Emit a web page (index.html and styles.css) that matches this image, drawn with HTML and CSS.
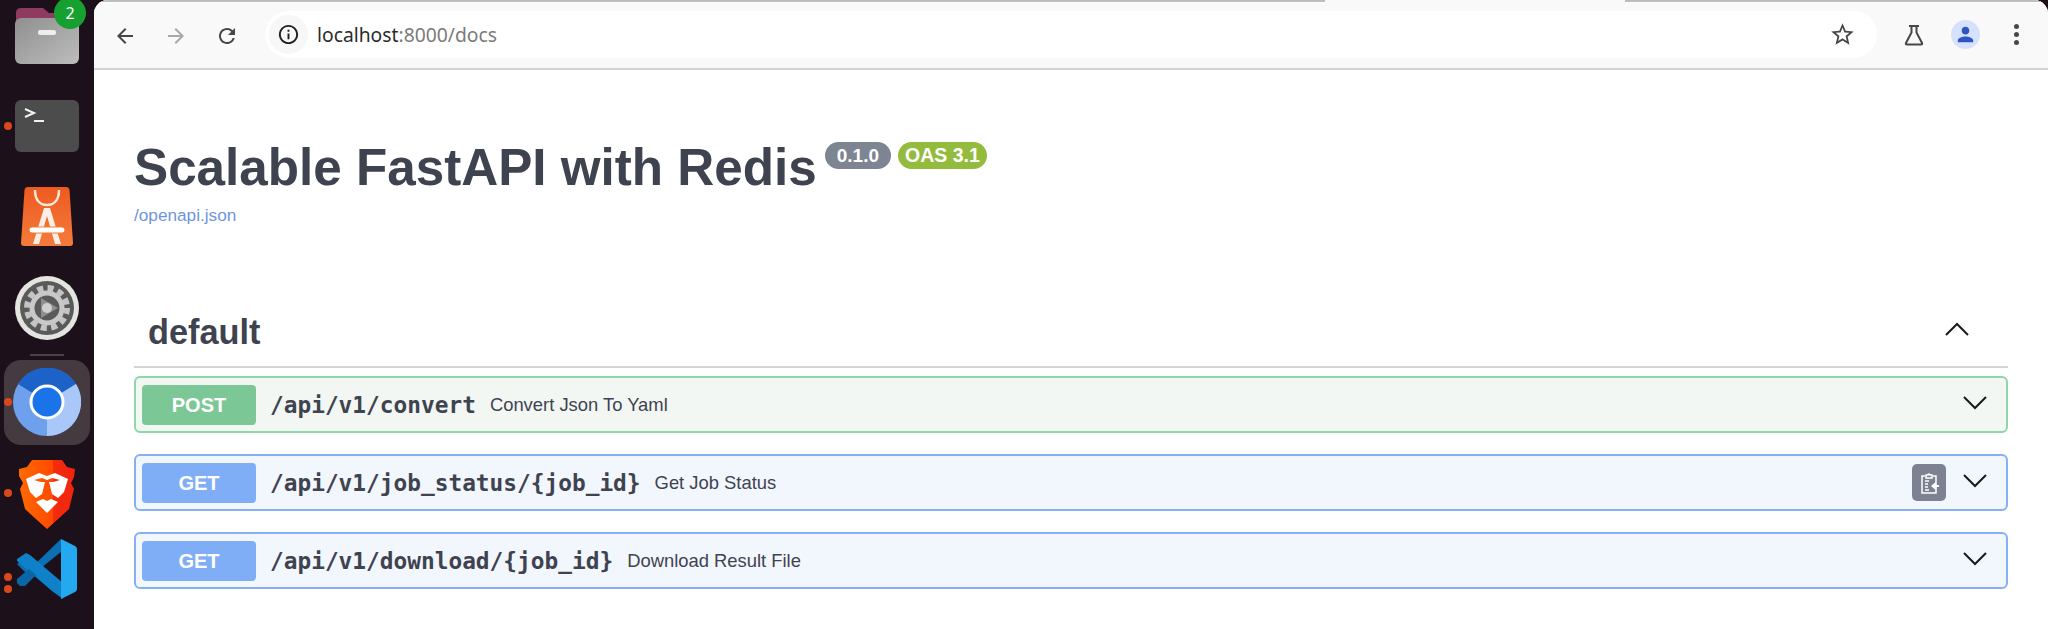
FILE: index.html
```html
<!DOCTYPE html>
<html lang="en">
<head>
<meta charset="utf-8">
<title>Scalable FastAPI with Redis - Swagger UI</title>
<link rel="stylesheet" href="styles.css">
</head>
<body>
<div class="desktop">
  <aside class="dock">
    <div class="dock-item item-files">
      <svg class="ic-files" viewBox="0 0 64 58">
        <defs><linearGradient id="fg" x1="0" y1="0" x2="1" y2="1"><stop offset="0" stop-color="#8f8f8f"/><stop offset="1" stop-color="#bdbdbd"/></linearGradient></defs>
        <path d="M1 14V6q0-5 5-5h22l6 5h24q5 0 5 5v10H1z" fill="#8e3a63"/>
        <rect x="0" y="11" width="64" height="46" rx="6" fill="url(#fg)"/>
        <rect x="23" y="23" width="18" height="5" rx="2" fill="#eeeeee"/>
      </svg>
      <span class="count">2</span>
    </div>
    <div class="dock-item item-term">
      <span class="dot"></span>
      <svg class="ic-term" viewBox="0 0 64 52">
        <rect width="64" height="52" rx="6" fill="#4c4c4c"/>
        <path d="M10 9l9 4-9 4M19 21h10" fill="none" stroke="#f2f2f2" stroke-width="2"/>
      </svg>
    </div>
    <div class="dock-item item-store">
      <svg class="ic-store" viewBox="0 0 52 60">
        <defs><linearGradient id="sg" x1="0" y1="0" x2="0" y2="1"><stop offset="0" stop-color="#ee5a20"/><stop offset="1" stop-color="#f47b3c"/></linearGradient></defs>
        <path d="M7 0h38q3 0 3.500 3L52 56q0 3-3 3H3q-3 0-3-3L3.500 3Q4 0 7 0z" fill="url(#sg)"/>
        <path d="M14 3c0 10 5 15 12 15s12-5 12-15" fill="none" stroke="#fbe9df" stroke-width="2.500"/>
        <path d="M23 21h6l11 36h-6l-8-28-8 28h-6z" fill="#fdeee6"/>
        <rect x="8" y="40" width="36" height="6" rx="3" fill="#fff" stroke="#f47b3c" stroke-width="1"/>
      </svg>
    </div>
    <div class="dock-item item-settings">
      <svg class="ic-settings" viewBox="0 0 64 64">
        <circle cx="32" cy="32" r="32" fill="#e4e4e0"/>
        <circle cx="32" cy="32" r="27" fill="#5a5a5a"/>
        <circle cx="32" cy="32" r="20" fill="none" stroke="#c4c4c4" stroke-width="6" stroke-dasharray="6 4.470"/>
        <circle cx="32" cy="32" r="15" fill="none" stroke="#c8c8c8" stroke-width="5"/>
        <path d="M26 22l17 10-17 10z" fill="#8f8f8f"/>
        <circle cx="32" cy="32" r="5" fill="#cfcfcf"/>
      </svg>
    </div>
    <div class="dock-sep"></div>
    <div class="dock-item item-chrome">
      <span class="dot"></span>
      <svg class="ic-chrome" viewBox="0 0 68 68">
        <circle cx="34" cy="34" r="34" fill="#6ea0ee"/>
        <path d="M34 34L5 16A34 34 0 0 1 63 16z" fill="#1c62c8"/>
        <path d="M34 34L63 16A34 34 0 0 1 34 68z" fill="#a9c7f8"/>
        <circle cx="34" cy="34" r="16" fill="#1a73e8" stroke="#fff" stroke-width="3"/>
      </svg>
    </div>
    <div class="dock-item item-brave">
      <span class="dot"></span>
      <svg class="ic-brave" viewBox="0 0 58 70">
        <defs><linearGradient id="bg" x1="0" y1="0" x2="1" y2="0"><stop offset="0" stop-color="#ff6a00"/><stop offset="0.600" stop-color="#ff4a00"/><stop offset="0.610" stop-color="#f52c0c"/><stop offset="1" stop-color="#f0240e"/></linearGradient></defs>
        <path d="M14 1h30l5 7 8 2-1 8-3 6 3 6-5 20-12 11-10 9-10-9L7 50 2 30l3-6-4-7v-7l8-2z" fill="url(#bg)"/>
        <path d="M8 20l13-6 8 3 8-3 13 6-4 13-6 6-6-4-3-12h4l7-2-8-2-5 2-5-2-8 2 7 2h4l-3 12-6 4-6-6z" fill="#fff"/>
        <path d="M18 43l7-3 4 2 4-2 7 3-11 11z" fill="#fff"/>
      </svg>
    </div>
    <div class="dock-item item-code">
      <span class="dot dot-a"></span>
      <span class="dot dot-b"></span>
      <svg class="ic-code" viewBox="0 0 60 60">
        <path d="M44 0L14 29l-9-7-5 3 13 13L45 12z" fill="#0b70b3"/>
        <path d="M46 44L13 16 9 14 0 20v2l35 30 11 8z" fill="#0e81c8"/>
        <path d="M3 47l-3-3V40l12-10 7 6-11 11z" fill="#0a67a6"/>
        <path d="M44 0l14 7q2 1 2 3v40q0 2-2 3l-14 7V0z" fill="#24a8f0"/>
      </svg>
    </div>
  </aside>

  <div class="window">
    <div class="tabstrip">
      <span class="tab-line tab-line-a"></span>
      <span class="tab-active"></span>
      <span class="tab-line tab-line-b"></span>
    </div>
    <header class="toolbar">
      <div class="nav">
        <svg class="tb-icon" viewBox="0 0 24 24"><path d="M20 11H7.830l5.590-5.590L12 4l-8 8 8 8 1.410-1.410L7.830 13H20v-2z"/></svg>
        <svg class="tb-icon muted" viewBox="0 0 24 24"><path d="M4 11h12.170l-5.590-5.590L12 4l8 8-8 8-1.410-1.410L16.170 13H4v-2z"/></svg>
        <svg class="tb-icon" viewBox="0 0 24 24"><path d="M17.650 6.350A7.958 7.958 0 0 0 12 4c-4.420 0-7.990 3.580-7.990 8s3.570 8 7.990 8c3.730 0 6.840-2.550 7.730-6h-2.080A5.990 5.990 0 0 1 12 18c-3.310 0-6-2.690-6-6s2.690-6 6-6c1.660 0 3.140.690 4.220 1.780L13 11h7V4l-2.350 2.350z"/></svg>
      </div>
      <div class="omnibox">
        <span class="site-info">
          <svg class="info-icon" viewBox="0 0 24 24"><path d="M11 7h2v2h-2zm0 4h2v6h-2zm1-9C6.480 2 2 6.480 2 12s4.480 10 10 10 10-4.480 10-10S17.520 2 12 2zm0 18c-4.410 0-8-3.590-8-8s3.590-8 8-8 8 3.590 8 8-3.590 8-8 8z"/></svg>
        </span>
        <span class="url">localhost<span class="url-rest">:8000/docs</span></span>
        <svg class="star" viewBox="0 0 24 24"><path d="M22 9.240l-7.190-.620L12 2 9.190 8.630 2 9.240l5.460 4.730L5.820 21 12 17.270 18.180 21l-1.630-7.030L22 9.240zM12 15.400l-3.760 2.270 1-4.280-3.320-2.880 4.380-.380L12 6.100l1.710 4.040 4.380.380-3.320 2.880 1 4.280L12 15.400z"/></svg>
      </div>
      <div class="actions">
        <svg class="flask" viewBox="0 0 24 24"><path d="M7 3h10M9.500 3v6.500L4 20q-.6 1.500 1 1.500h14q1.600 0 1-1.500L14.500 9.500V3" fill="none" stroke="#474747" stroke-width="2"/></svg>
        <span class="avatar"><svg viewBox="0 0 24 24"><path d="M12 12c2.210 0 4-1.790 4-4s-1.790-4-4-4-4 1.790-4 4 1.790 4 4 4zm0 2c-2.670 0-8 1.340-8 4v2h16v-2c0-2.660-5.330-4-8-4z"/></svg></span>
        <span class="kebab"><i></i><i></i><i></i></span>
      </div>
    </header>

    <main class="page">
      <section class="info">
        <div class="title-row">
          <h1 class="title">Scalable FastAPI with Redis</h1>
          <span class="badge badge-version">0.1.0</span>
          <span class="badge badge-oas">OAS 3.1</span>
        </div>
        <a class="spec-link" href="#">/openapi.json</a>
      </section>

      <section class="group">
        <div class="group-head">
          <h2 class="group-name">default</h2>
          <svg class="chev chev-up" viewBox="0 0 24 14"><path d="M1 13L12 2l11 11"/></svg>
        </div>
        <div class="ops">
          <div class="op op-post">
            <span class="method">POST</span>
            <span class="path">/api/v1/convert</span>
            <span class="summary">Convert Json To Yaml</span>
            <svg class="chev" viewBox="0 0 24 14"><path d="M1 1l11 11L23 1"/></svg>
          </div>
          <div class="op op-get">
            <span class="method">GET</span>
            <span class="path">/api/v1/job_status/{job_id}</span>
            <span class="summary">Get Job Status</span>
            <span class="copy">
              <svg viewBox="0 0 24 24"><path d="M8 5H5v17h14V5h-3M9 7V4h2a1 1 0 0 1 2 0h2v3z" fill="none" stroke="#fff" stroke-width="1.500"/><path d="M8 10h4M8 13h3M8 16h3M8 19h4" stroke="#fff" stroke-width="1.300"/><path d="M22 15h-6m3-3l-3.500 3 3.500 3" fill="none" stroke="#fff" stroke-width="2"/></svg>
            </span>
            <svg class="chev" viewBox="0 0 24 14"><path d="M1 1l11 11L23 1"/></svg>
          </div>
          <div class="op op-get">
            <span class="method">GET</span>
            <span class="path">/api/v1/download/{job_id}</span>
            <span class="summary">Download Result File</span>
            <svg class="chev" viewBox="0 0 24 14"><path d="M1 1l11 11L23 1"/></svg>
          </div>
        </div>
      </section>
    </main>
  </div>
</div>
</body>
</html>
```
FILE: styles.css
```css
* { box-sizing: border-box; }
html, body { margin: 0; height: 100%; }
body { background: #fff; font-family: "Liberation Sans", Arial, sans-serif; overflow: hidden; }

.desktop { display: flex; width: 2048px; height: 629px; overflow: hidden; background: #1c0f1a; }

/* Dock */
.dock { width: 94px; flex: none; display: flex; flex-direction: column; align-items: center; background: #1c101a; }
.dock-item { position: relative; width: 94px; display: flex; justify-content: center; }
.item-files { height: 100px; padding-top: 7px; }
.item-term { height: 88px; }
.item-store { height: 86px; }
.item-settings { height: 80px; padding-top: 3px; }
.ic-files { width: 64px; height: 58px; }
.ic-term { width: 64px; height: 52px; }
.ic-store { width: 52px; height: 60px; }
.ic-settings { width: 64px; height: 64px; }
.count { position: absolute; left: 54px; top: -3px; width: 32px; height: 32px; border-radius: 50%; background: #16a02f; color: #fff; font: 16px/32px "Noto Sans", sans-serif; text-align: center; }
.dot { position: absolute; left: 4px; top: 22px; width: 8px; height: 8px; border-radius: 50%; background: #d9481c; }
.dock-sep { width: 34px; height: 2px; margin: 1px 0 4px; background: #4b4148; flex: none; }
.item-chrome { width: 86px; height: 85px; align-items: center; border-radius: 17px; background: #443a40; flex: none; }
.item-chrome .dot { left: 0; top: 38px; }
.item-brave { height: 95px; padding-top: 14px; }
.item-brave .dot { top: 44px; }
.ic-chrome { width: 68px; height: 68px; }
.ic-brave { width: 58px; height: 70px; }
.item-code { height: 90px; }
.ic-code { width: 60px; height: 60px; }
.item-code .dot-a { top: 34px; }
.item-code .dot-b { top: 46px; }

/* Window chrome */
.window { flex: 1; min-width: 0; background: #fff; display: flex; flex-direction: column; border-radius: 14px 14px 0 0; overflow: hidden; }
.tabstrip { flex: none; height: 3px; display: flex; background: #fff; }
.tab-line { display: block; height: 2px; background: #bdbdbd; }
.tab-line-a { width: 1231px; }
.tab-active { width: 300px; background: #f9f9f9; height: 3px; }
.tab-line-b { flex: 1; }
.toolbar { flex: none; height: 67px; display: flex; align-items: center; background: #f9f9f9; border-bottom: 2px solid #d2d2d2; padding: 0 0 0 19px; }
.nav { display: flex; gap: 27px; width: 152px; flex: none; }
.tb-icon { width: 24px; height: 24px; fill: #474747; }
.tb-icon.muted { fill: #a8a8a8; }
.omnibox { flex: none; width: 1612px; height: 47px; margin-top: -2px; background: #fff; border-radius: 24px; display: flex; align-items: center; padding: 0 21px 0 4px; }
.site-info { width: 39px; height: 39px; border-radius: 50%; background: #f7f7f7; display: flex; align-items: center; justify-content: center; flex: none; }
.info-icon { width: 23px; height: 23px; fill: #1f1f1f; }
.url { margin-left: 9px; flex: 1; font: 19.300px "Noto Sans", sans-serif; color: #2b2b2b; }
.url-rest { color: #7a7a7a; }
.star { width: 27px; height: 27px; fill: #474747; }
.actions { flex: 1; display: flex; align-items: center; margin-top: -2px; padding-left: 25px; }
.flask { width: 24px; height: 24px; }
.avatar { width: 29px; height: 29px; margin-left: 25px; border-radius: 50%; background: #d6e2fb; display: flex; align-items: center; justify-content: center; }
.avatar svg { width: 23px; height: 23px; fill: #2f55c4; }
.kebab { margin-left: 34px; display: flex; flex-direction: column; gap: 3px; }
.kebab i { display: block; width: 5px; height: 5px; border-radius: 50%; background: #474747; }

/* Swagger page */
.page { flex: 1; padding: 68px 40px 0; color: #3f4350; }
.title-row { display: flex; align-items: flex-start; }
.title { margin: 0; font-size: 51.200px; line-height: 60px; font-weight: 700; color: #3f4350; }
.badge { margin-top: 4px; height: 27px; border-radius: 14px; color: #fff; font-size: 19px; line-height: 27px; font-weight: 700; padding: 0 12px; }
.badge-version { margin-left: 8px; background: #7d8492; }
.badge-oas { margin-left: 7px; background: #93bb3c; padding: 0 7px; font-size: 19.500px; }
.spec-link { display: block; margin-top: 7px; font-size: 17.200px; line-height: 20px; color: #6f95e0; text-decoration: none; }
.group { margin-top: 73px; }
.group-head { height: 70px; display: flex; align-items: center; justify-content: space-between; padding: 0 39px 0 14px; border-bottom: 2px solid #d3d4d6; }
.group-name { margin: 0; font-size: 34.300px; line-height: 40px; font-weight: 700; color: #3f4350; }
.ops { display: flex; flex-direction: column; gap: 21px; margin-top: 8px; }
.op { height: 57px; display: flex; align-items: center; padding: 0 19px 0 6px; border-radius: 6px; border: 2px solid; }
.op-post { background: #f2f7f3; border-color: #8fd6a8; }
.op-get { background: #f2f6fd; border-color: #85aff6; }
.method { width: 114px; height: 40px; flex: none; border-radius: 4px; color: #fff; font-size: 20px; line-height: 40px; font-weight: 700; text-align: center; }
.op-post .method { background: #7cc796; }
.op-get .method { background: #7fadf6; }
.path { margin-left: 14px; font-family: "DejaVu Sans Mono", monospace; font-weight: 700; font-size: 22.800px; color: #3f4350; }
.summary { margin-left: 14px; flex: 1; font-size: 18.400px; color: #3f4350; }
.copy { width: 34px; height: 37px; border-radius: 5px; background: #7d8293; display: flex; align-items: center; justify-content: center; margin-right: 17px; }
.copy svg { width: 24px; height: 24px; }
.chev { width: 24px; height: 14px; flex: none; fill: none; stroke: #1a1a1a; stroke-width: 2; margin-bottom: 4px; }
.chev-up { margin-bottom: 6px; }
```
